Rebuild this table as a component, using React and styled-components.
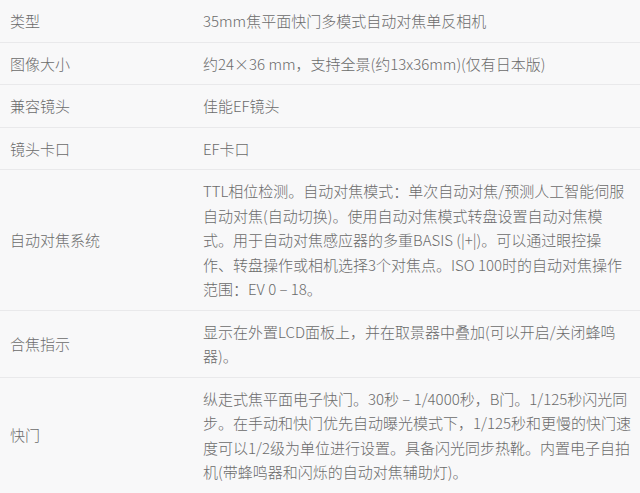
import React from 'react'
import styled, { createGlobalStyle } from 'styled-components'

const GlobalStyle = createGlobalStyle`
  html, body {
    margin: 0;
    padding: 0;
    background: #f8f8f9;
  }
  body {
    font-family: "Noto Sans CJK SC", "Noto Sans", sans-serif;
  }
`

// each value is kept as the lines shown in the table
const specs = [
  { label: '类型', lines: ['35mm焦平面快门多模式自动对焦单反相机'] },
  { label: '图像大小', lines: ['约24×36 mm，支持全景(约13x36mm)(仅有日本版)'] },
  { label: '兼容镜头', lines: ['佳能EF镜头'] },
  { label: '镜头卡口', lines: ['EF卡口'] },
  {
    label: '自动对焦系统',
    lines: [
      'TTL相位检测。自动对焦模式：单次自动对焦/预测人工智能伺服',
      '自动对焦(自动切换)。使用自动对焦模式转盘设置自动对焦模',
      '式。用于自动对焦感应器的多重BASIS (|+|)。可以通过眼控操',
      '作、转盘操作或相机选择3个对焦点。ISO 100时的自动对焦操作',
      '范围：EV 0 – 18。',
    ],
  },
  {
    label: '合焦指示',
    lines: ['显示在外置LCD面板上，并在取景器中叠加(可以开启/关闭蜂鸣', '器)。'],
  },
  {
    label: '快门',
    lines: [
      '纵走式焦平面电子快门。30秒 – 1/4000秒，B门。1/125秒闪光同',
      '步。在手动和快门优先自动曝光模式下，1/125秒和更慢的快门速',
      '度可以1/2级为单位进行设置。具备闪光同步热靴。内置电子自拍',
      '机(带蜂鸣器和闪烁的自动对焦辅助灯)。',
    ],
  },
]

const SpecTable = () => {
  return (
    <Table>
      {specs.map((row) => (
        <Row key={row.label}>
          <Label>{row.label}</Label>
          <Value>
            {row.lines.map((line, i) => (
              <Line key={i}>{line}</Line>
            ))}
          </Value>
        </Row>
      ))}
    </Table>
  )
}

export default function App() {
  return (
    <>
      <GlobalStyle />
      <SpecTable />
    </>
  )
}

const Table = styled.div`
  width: 640px;
  display: flex;
  flex-direction: column;
  background: #f8f8f9;
`

const Row = styled.div`
  display: grid;
  grid-template-columns: 193px 1fr;
  align-items: center;
  border-bottom: 1px solid #e9e9eb;
  padding: 9px 0 8px;
  font-size: 15px;
  font-weight: 300;
  line-height: 24.5px;
  color: #6b6b6b;
`

const Label = styled.div`
  padding-left: 10px;
`

const Value = styled.div`
  padding: 0 10px;
  overflow: hidden;
`

const Line = styled.span`
  display: block;
  white-space: nowrap;
`
